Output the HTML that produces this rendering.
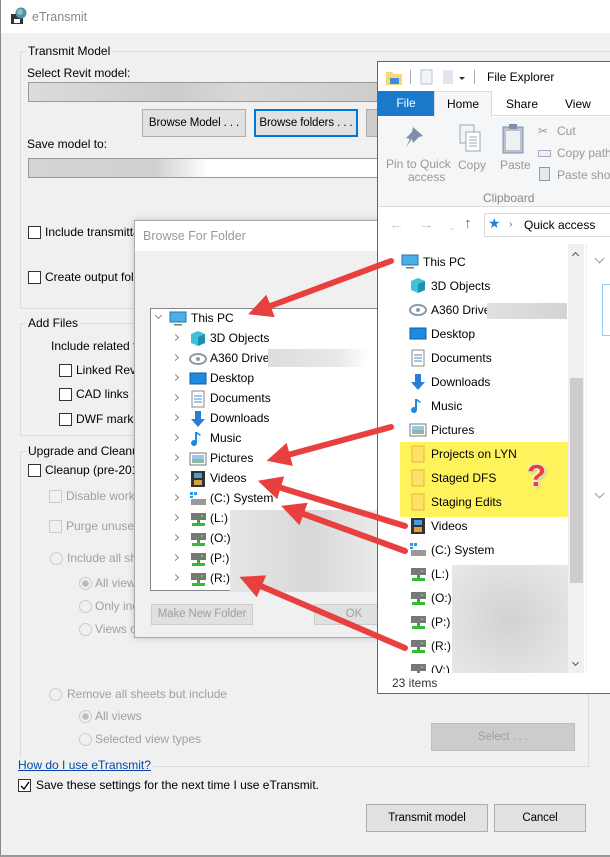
<!DOCTYPE html>
<html><head><meta charset="utf-8"><style>
*{box-sizing:border-box;margin:0;padding:0}
body{width:610px;height:857px;overflow:hidden;background:#f0f0f0;font-family:"Liberation Sans",sans-serif;font-size:12px;color:#000;position:relative}
.a{position:absolute;white-space:nowrap}
.t{position:absolute;white-space:nowrap;line-height:14px}
.cb{position:absolute;width:13px;height:13px;border:1px solid #333;background:#fff}
.cbd{position:absolute;width:13px;height:13px;border:1px solid #ccc;background:#f0f0f0}
.rd{position:absolute;width:13px;height:13px;border:1px solid #ccc;border-radius:50%;background:#f0f0f0}
.dis{color:#a0a0a0}
.btn{position:absolute;background:#e1e1e1;border:1px solid #adadad;text-align:center;line-height:26px;font-size:11.5px;letter-spacing:-0.1px}
.grp{position:absolute;border:1px solid #dcdcdc}
.lbl{position:absolute;background:#f0f0f0;padding:0 2px;line-height:14px}
.chev{position:absolute;width:5px;height:5px;border-right:1.3px solid #888;border-bottom:1.3px solid #888}
</style></head><body>
<div class="a" style="left:0;top:0;width:610px;height:33px;background:#fff"></div>
<div class="a" style="left:0;top:0;width:1px;height:857px;background:#888"></div>
<div class="a" style="left:0;top:855px;width:610px;height:2px;background:#999"></div>
<svg class="a" style="left:10px;top:7px" width="18" height="18"><rect x="1" y="7" width="12" height="10" fill="#333"/><rect x="4" y="12" width="6" height="4" fill="#fff"/><circle cx="11" cy="6" r="5.5" fill="#4a8fb8"/><circle cx="10" cy="5" r="3" fill="#8cc7a0"/></svg>
<div class="t" style="left:32px;top:10px;font-size:12.5px;color:#888">eTransmit</div>

<div class="grp" style="left:20px;top:51px;width:600px;height:258px"></div>
<div class="lbl" style="left:26px;top:44px">Transmit Model</div>
<div class="t" style="left:27px;top:66px">Select Revit model:</div>
<div class="a" style="left:28px;top:82px;width:360px;height:20px;border:1px solid #999;background:linear-gradient(90deg,#dcdcdc,#ccc 40%,#d8d8d8 60%,#ccc)"></div>
<div class="btn" style="left:142px;top:109px;width:104px;height:28px">Browse Model . . .</div>
<div class="btn" style="left:254px;top:109px;width:104px;height:28px;border:2px solid #0078d7;line-height:24px">Browse folders . . .</div>
<div class="btn" style="left:366px;top:109px;width:30px;height:28px;background:#ccc"></div>
<div class="t" style="left:27px;top:137px">Save model to:</div>
<div class="a" style="left:28px;top:158px;width:360px;height:20px;border:1px solid #999;background:linear-gradient(90deg,#d4d4d4,#d0d0d0 35%,#fff 50%,#fff)"></div>
<div class="cb" style="left:28px;top:226px"></div><div class="t" style="left:45px;top:225px">Include transmittal</div>
<div class="cb" style="left:28px;top:271px"></div><div class="t" style="left:45px;top:270px">Create output folder</div>

<div class="grp" style="left:20px;top:323px;width:600px;height:113px"></div>
<div class="lbl" style="left:26px;top:316px">Add Files</div>
<div class="t" style="left:51px;top:339px">Include related files</div>
<div class="cb" style="left:59px;top:364px"></div><div class="t" style="left:76px;top:363px">Linked Revit</div>
<div class="cb" style="left:59px;top:388px"></div><div class="t" style="left:76px;top:387px">CAD links</div>
<div class="cb" style="left:59px;top:413px"></div><div class="t" style="left:76px;top:412px">DWF markups</div>

<div class="grp" style="left:20px;top:451px;width:569px;height:316px"></div>
<div class="lbl" style="left:26px;top:444px">Upgrade and Cleanup</div>
<div class="cb" style="left:28px;top:464px"></div><div class="t" style="left:45px;top:463px">Cleanup (pre-2019</div>
<div class="cbd" style="left:49px;top:490px"></div><div class="t dis" style="left:66px;top:489px">Disable worksharing</div>
<div class="cbd" style="left:49px;top:520px"></div><div class="t dis" style="left:66px;top:519px">Purge unused</div>
<div class="rd" style="left:50px;top:552px"></div><div class="t dis" style="left:67px;top:551px">Include all sheets</div>
<div class="rd" style="left:79px;top:577px;background:radial-gradient(#bbb 3px,#f0f0f0 3.5px)"></div><div class="t dis" style="left:95px;top:576px">All views</div>
<div class="rd" style="left:79px;top:600px"></div><div class="t dis" style="left:95px;top:599px">Only include</div>
<div class="rd" style="left:79px;top:623px"></div><div class="t dis" style="left:95px;top:622px">Views on</div>
<div class="rd" style="left:49px;top:688px"></div><div class="t dis" style="left:67px;top:687px">Remove all sheets but include</div>
<div class="rd" style="left:79px;top:710px;background:radial-gradient(#bbb 3px,#f0f0f0 3.5px)"></div><div class="t dis" style="left:95px;top:709px">All views</div>
<div class="rd" style="left:79px;top:733px"></div><div class="t dis" style="left:95px;top:732px">Selected view types</div>
<div class="btn dis" style="left:431px;top:723px;width:144px;height:28px;background:#ccc;border-color:#bfbfbf">Select . . .</div>

<div class="t" style="left:18px;top:758px;color:#0645ad;text-decoration:underline;background:#f0f0f0;padding-right:2px">How do I use eTransmit?</div>
<div class="cb" style="left:18px;top:779px"></div><svg class="a" style="left:20px;top:781px" width="10" height="10"><path d="M1 5 L4 8 L9 1" stroke="#000" stroke-width="1.3" fill="none"/></svg>
<div class="t" style="left:36px;top:778px">Save these settings for the next time I use eTransmit.</div>
<div class="btn" style="left:366px;top:804px;width:122px;height:28px">Transmit model</div>
<div class="btn" style="left:494px;top:804px;width:92px;height:28px">Cancel</div>

<div class="a" style="left:134px;top:220px;width:250px;height:418px;background:#f0f0f0;border:1px solid #aaa;box-shadow:0 0 6px rgba(0,0,0,.2)"></div>
<div class="a" style="left:135px;top:221px;width:248px;height:30px;background:#fff"></div>
<div class="t" style="left:143px;top:229px;color:#999;font-size:12.5px">Browse For Folder</div>
<div class="a" style="left:150px;top:308px;width:240px;height:283px;background:#fff;border:1px solid #828790"></div>
<div class="chev" style="left:156px;top:313px;transform:rotate(45deg)"></div>
<svg class="a" style="left:169px;top:311px" width="18" height="16"><rect x="1" y="1" width="16" height="10" fill="#4cb0e8" stroke="#2a6fa5"/><rect x="5" y="13" width="8" height="1.5" fill="#777"/></svg>
<div class="t" style="left:191px;top:311px">This PC</div>
<div id="bff"></div>
<div class="a" style="left:230px;top:510px;width:160px;height:82px;background:linear-gradient(90deg,#e6e6e6,#d8d8d8 50%,#eee)"></div>
<div class="a" style="left:268px;top:349px;width:100px;height:18px;background:linear-gradient(90deg,#ddd,#e8e8e8 70%,#fff)"></div>
<div class="btn dis" style="left:151px;top:604px;width:102px;height:21px;line-height:19px;background:#e0e0e0;border-color:#ccc">Make New Folder</div>
<div class="btn dis" style="left:314px;top:604px;width:80px;height:21px;line-height:19px;background:#e0e0e0;border-color:#ccc">OK</div>

<div class="a" style="left:377px;top:61px;width:240px;height:633px;background:#fff;border:1px solid #1979ca"></div>
<svg class="a" style="left:385px;top:67px" width="100" height="20"><path d="M1 5h6l2 2h8v11H1z" fill="#f8d775"/><rect x="5" y="11" width="9" height="6" fill="#3a8fd8"/><rect x="25" y="3" width="1" height="14" fill="#aaa"/><rect x="36" y="3" width="11" height="14" fill="#f2f5f8" stroke="#b6c2d0"/><rect x="58" y="3" width="10" height="14" fill="#dfe6ee"/><path d="M74 10h6l-3 3z" fill="#333"/><rect x="89" y="3" width="1" height="14" fill="#aaa"/></svg>
<div class="t" style="left:487px;top:70px">File Explorer</div>
<div class="a" style="left:378px;top:91px;width:232px;height:25px;background:#fff;border-bottom:1px solid #dadbdc"></div>
<div class="a" style="left:378px;top:91px;width:56px;height:25px;background:#1979ca;color:#fff;text-align:center;line-height:25px">File</div>
<div class="a" style="left:434px;top:91px;width:58px;height:26px;background:#f5f6f7;border:1px solid #dadbdc;border-bottom:none;text-align:center;line-height:25px">Home</div>
<div class="t" style="left:506px;top:97px">Share</div>
<div class="t" style="left:565px;top:97px">View</div>
<div class="a" style="left:378px;top:117px;width:232px;height:90px;background:#f5f6f7;border-bottom:1px solid #dadbdc"></div>
<svg class="a" style="left:403px;top:125px" width="24" height="28"><path d="M10 2l10 9-4 1-6 6-1-4-6 8 4-8-4-1 6-6z" fill="#7d8fa8"/></svg>
<div class="t dis" style="left:386px;top:158px;text-align:center;line-height:13px;color:#999">Pin to Quick<br>&nbsp;&nbsp;&nbsp;&nbsp;&nbsp;access</div>
<svg class="a" style="left:459px;top:124px" width="24" height="30"><rect x="1" y="1" width="14" height="18" fill="#f4f4f4" stroke="#9ab"/><rect x="7" y="8" width="14" height="19" fill="#fff" stroke="#9ab"/><path d="M10 13h8M10 16h8M10 19h8M10 22h8" stroke="#9ab"/></svg>
<div class="t" style="left:458px;top:158px;color:#999">Copy</div>
<svg class="a" style="left:502px;top:123px" width="22" height="32"><rect x="1" y="4" width="20" height="26" fill="#b9c3cf" stroke="#7d8fa8"/><rect x="4" y="8" width="14" height="19" fill="#eef1f4"/><rect x="7" y="1" width="8" height="5" fill="#7d8fa8"/></svg>
<div class="t" style="left:500px;top:158px;color:#999">Paste</div>
<div class="t" style="left:538px;top:124px;color:#999">✂</div>
<div class="t" style="left:557px;top:124px;color:#999">Cut</div>
<div class="a" style="left:538px;top:150px;width:13px;height:7px;border:1px solid #aab;background:#eef"></div>
<div class="t" style="left:557px;top:146px;color:#999">Copy path</div>
<div class="a" style="left:539px;top:167px;width:11px;height:14px;border:1px solid #8a9ab0;background:#e4e9ef"></div>
<div class="t" style="left:557px;top:168px;color:#999">Paste shor</div>
<div class="t" style="left:483px;top:191px;color:#888">Clipboard</div>
<div class="t" style="left:389px;top:218px;color:#ccc;font-size:15px">←</div>
<div class="t" style="left:419px;top:218px;color:#ccc;font-size:15px">→</div>
<div class="t" style="left:448px;top:220px;color:#ccc;font-size:9px">⌄</div>
<div class="t" style="left:464px;top:217px;color:#666;font-size:15px">↑</div>
<div class="a" style="left:484px;top:213px;width:130px;height:24px;border:1px solid #d9d9d9;background:#fff"></div>
<div class="t" style="left:488px;top:216px;color:#2a7fd4;font-size:14px">★</div>
<div class="t" style="left:509px;top:218px;color:#666;font-size:10px">›</div>
<div class="t" style="left:524px;top:218px">Quick access</div>
<div class="a" style="left:568px;top:244px;width:16px;height:432px;background:#f0f0f0"></div>
<div class="a" style="left:570px;top:378px;width:13px;height:205px;background:#cdcdcd"></div>
<div class="chev" style="left:573px;top:253px;transform:rotate(-135deg);border-color:#555"></div>
<div class="chev" style="left:573px;top:660px;transform:rotate(45deg);border-color:#555"></div>
<div class="a" style="left:586px;top:244px;width:1px;height:432px;background:#eee"></div>
<div class="chev" style="left:596px;top:255px;transform:rotate(45deg);border-color:#999;width:7px;height:7px"></div>
<div class="chev" style="left:596px;top:490px;transform:rotate(45deg);border-color:#999;width:7px;height:7px"></div>
<div class="a" style="left:602px;top:284px;width:10px;height:52px;border:1px solid #99c9ef"></div>
<div class="a" style="left:400px;top:442px;width:168px;height:75px;background:#fff35c"></div>
<svg class="a" style="left:401px;top:254px" width="18" height="16"><rect x="1" y="1" width="16" height="10" fill="#4cb0e8" stroke="#2a6fa5"/><rect x="5" y="13" width="8" height="1.5" fill="#777"/></svg>
<div class="t" style="left:423px;top:255px">This PC</div>
<div id="fe"></div>
<div class="a" style="left:487px;top:303px;width:80px;height:16px;background:linear-gradient(90deg,#e0e0e0,#d4d4d4)"></div>
<div class="a" style="left:452px;top:565px;width:116px;height:108px;background:radial-gradient(#d2d2d2,#e8e8e8)"></div>
<div class="t" style="left:527px;top:460px;color:#e8403f;font-size:31px;line-height:32px;font-weight:bold;text-shadow:0 0 3px #fff,0 0 3px #fff,1px 1px 3px #888">?</div>
<div class="a" style="left:378px;top:673px;width:232px;height:20px;background:#fff"></div>
<div class="t" style="left:392px;top:676px;color:#333">23 items</div>

<svg class="a" style="left:0;top:0" width="610" height="857">
<defs><marker id="h" markerWidth="4" markerHeight="4" refX="1" refY="2" orient="auto" markerUnits="strokeWidth"><path d="M0 0L4 2L0 4z" fill="#e8403f"/></marker></defs>
<g stroke="#e8403f" stroke-width="6" stroke-linecap="round" fill="none">
<path d="M391 261 L265 308" marker-end="url(#h)"/>
<path d="M391 427 L284 456" marker-end="url(#h)"/>
<path d="M405 526 L275 486" marker-end="url(#h)"/>
<path d="M405 551 L298 512" marker-end="url(#h)"/>
<path d="M405 648 L256 584" marker-end="url(#h)"/>
</g></svg>

<script>
const ic={
'3D Objects':'<path d="M2 4l7-3 7 3v9l-7 3-7-3z" fill="#3cc3d8"/><path d="M9 7v9l7-3V4z" fill="#1a92b0"/>',
'A360 Drive':'<ellipse cx="9" cy="9" rx="8" ry="5" fill="none" stroke="#8a9aa8" stroke-width="2"/><circle cx="9" cy="9" r="2" fill="#8a9aa8"/>',
'Desktop':'<rect x="1" y="3" width="16" height="11" fill="#1e8ae0" stroke="#0b5ea8"/>',
'Documents':'<rect x="3" y="1" width="12" height="16" fill="#fff" stroke="#888"/><path d="M5 6h8M5 9h8M5 12h8" stroke="#4a8fd0"/>',
'Downloads':'<path d="M6 1h6v8h4l-7 8-7-8h4z" fill="#2a7fd4"/>',
'Music':'<path d="M8 2v11a3 3 0 1 1-2-2.8V2h2l4 3-1 1-3-2" fill="#1e8ae0"/>',
'Pictures':'<rect x="1" y="3" width="16" height="12" fill="#fff" stroke="#777"/><rect x="3" y="5" width="12" height="8" fill="#8fb8a0"/><rect x="3" y="5" width="12" height="4" fill="#9cc6e8"/>',
'folder':'<rect x="3" y="1" width="12" height="16" fill="#ffe06a" stroke="#e5b92e"/>',
'Videos':'<rect x="2" y="1" width="14" height="16" fill="#333"/><rect x="5" y="3" width="8" height="5" fill="#4a9ad8"/><rect x="5" y="10" width="8" height="5" fill="#d8a040"/>',
'(C:) System':'<rect x="2" y="9" width="15" height="6" fill="#999"/><rect x="1" y="2" width="3" height="3" fill="#2a9ae8"/><rect x="5" y="2" width="3" height="3" fill="#2a9ae8"/><rect x="1" y="6" width="3" height="2" fill="#2a9ae8"/>',
'net':'<rect x="2" y="3" width="15" height="7" fill="#777"/><rect x="12" y="5" width="2" height="2" fill="#4d4"/><rect x="8" y="10" width="3" height="3" fill="#3a3"/><rect x="3" y="13" width="13" height="3" fill="#3b3"/>'
};
function svg(k){return '<svg width="18" height="18" style="position:absolute">'+ic[k]+'</svg>'}
let h='';
const bl=['3D Objects','A360 Drive','Desktop','Documents','Downloads','Music','Pictures','Videos','(C:) System','(L:)','(O:)','(P:)','(R:)'];
bl.forEach((n,i)=>{const y=331+i*20;const k=ic[n]?n:'net';
h+='<div class="chev" style="left:173px;top:'+(y+4)+'px;transform:rotate(-45deg)"></div>';
h+='<div class="a" style="left:189px;top:'+(y-1)+'px">'+svg(k)+'</div>';
h+='<div class="t" style="left:210px;top:'+y+'px">'+n+'</div>';});
document.getElementById('bff').outerHTML=h;
h='';
const fl=['3D Objects','A360 Drive','Desktop','Documents','Downloads','Music','Pictures','Projects on LYN','Staged DFS','Staging Edits','Videos','(C:) System','(L:)','(O:)','(P:)','(R:)','(V:)'];
fl.forEach((n,i)=>{const y=279+i*24;const k=ic[n]?n:(n[0]=='('?'net':'folder');
h+='<div class="a" style="left:409px;top:'+(y-2)+'px">'+svg(k)+'</div>';
h+='<div class="t" style="left:431px;top:'+y+'px">'+n+'</div>';});
document.getElementById('fe').outerHTML=h;
</script>
</body></html>
